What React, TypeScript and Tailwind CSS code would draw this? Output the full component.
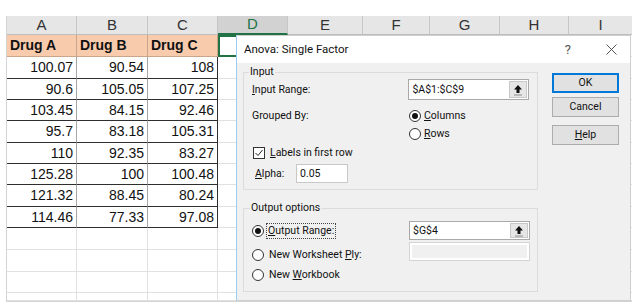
import React from "react";

const columns = [
  { label: "A", w: "w-[70px]" },
  { label: "B", w: "w-[71px]" },
  { label: "C", w: "w-[70px]" },
  { label: "D", w: "w-[70px]" },
  { label: "E", w: "w-[75px]" },
  { label: "F", w: "w-[67px]" },
  { label: "G", w: "w-[70px]" },
  { label: "H", w: "w-[69px]" },
  { label: "I", w: "w-[64px]" },
];

const data = [
  ["100.07", "90.54", "108"],
  ["90.6", "105.05", "107.25"],
  ["103.45", "84.15", "92.46"],
  ["95.7", "83.18", "105.31"],
  ["110", "92.35", "83.27"],
  ["125.28", "100", "100.48"],
  ["121.32", "88.45", "80.24"],
  ["114.46", "77.33", "97.08"],
];

const rowHeights = ["h-[22px]", "h-[21px]", "h-[21px]", "h-[22px]", "h-[21px]", "h-[21px]", "h-[22px]", "h-[21px]"];
const emptyHeights = ["h-[22px]", "h-[22px]", "h-[21px]", "h-[8px]"];

function UploadIcon() {
  return (
    <svg width="10" height="12" viewBox="0 0 10 12">
      <path d="M5 1 L9 5.5 L6.5 5.5 L6.5 9 L3.5 9 L3.5 5.5 L1 5.5 Z" fill="#111" />
      <rect x="1" y="10.5" width="8" height="1" fill="#8a8a8a" />
    </svg>
  );
}

function RangeField({ value }: { value: string }) {
  return (
    <div className="flex h-full w-[121px] border border-[#a9a9a9] bg-white">
      <div className="flex flex-1 items-center pl-[3px] text-[10.5px] text-[#111]">{value}</div>
      <div className="m-[1px] flex w-[18px] items-center justify-center border border-[#c8c8c8] bg-[#e6e6e6]">
        <UploadIcon />
      </div>
    </div>
  );
}

function Radio({ checked }: { checked?: boolean }) {
  return (
    <span className="flex h-[12px] w-[12px] shrink-0 items-center justify-center rounded-full border border-[#333] bg-white">
      {checked && <span className="h-[6px] w-[6px] rounded-full bg-[#111]" />}
    </span>
  );
}

function DlgButton({ children, primary }: { children: React.ReactNode; primary?: boolean }) {
  return (
    <div
      className={
        primary
          ? "flex h-[20px] w-[67px] items-center justify-center border-2 border-[#0078d7] bg-[#e1e1e1] text-[10.5px] text-[#111]"
          : "flex h-[20px] w-[67px] items-center justify-center border border-[#adadad] bg-[#e1e1e1] text-[10.5px] text-[#111]"
      }
    >
      {children}
    </div>
  );
}

export default function App() {
  return (
    <div
      className="relative h-[307px] w-[632px] overflow-hidden bg-white"
      style={{ fontFamily: "'Liberation Sans', Arial, sans-serif" }}
    >
      {/* Sheet */}
      <div className="ml-[6px] mt-[16px] border-b border-l border-[#d4d4d4]">
        <div className="flex h-[19px] bg-[#e6e6e6]">
          {columns.map((c) => (
            <div
              key={c.label}
              className={
                c.label === "D"
                  ? `${c.w} flex shrink-0 items-center justify-center border-b-2 border-r border-b-[#217346] border-r-[#c6c6c6] bg-[#d2d2d2] text-[15px] text-[#217346]`
                  : `${c.w} flex shrink-0 items-center justify-center border-b border-r border-b-[#bdbdbd] border-r-[#c6c6c6] text-[15px] text-[#333]`
              }
            >
              {c.label}
            </div>
          ))}
        </div>

        {/* Drug header row */}
        <div className="flex h-[22px]">
          {["Drug A", "Drug B", "Drug C"].map((t, i) => (
            <div
              key={t}
              className={`${columns[i].w} flex shrink-0 items-center border-b border-r border-[#c9a58c] bg-[#f8cbad] pl-[3px] text-[14px] font-bold text-[#111]`}
            >
              {t}
            </div>
          ))}
          <div className="w-[70px] shrink-0 border-2 border-[#217346] bg-white" />
          {columns.slice(4).map((c) => (
            <div key={c.label} className={`${c.w} shrink-0 border-b border-r border-[#e1e1e1]`} />
          ))}
        </div>

        {data.map((row, r) => (
          <div key={r} className={`flex ${rowHeights[r]}`}>
            {row.map((v, i) => (
              <div
                key={i}
                className={
                  i === 2
                    ? `${columns[i].w} flex shrink-0 items-center justify-end border-b border-r border-[#2e2e2e] pr-[3px] text-[14px] text-[#111]`
                    : `${columns[i].w} flex shrink-0 items-center justify-end border-b border-r border-b-[#2e2e2e] border-r-[#a6a6a6] pr-[3px] text-[14px] text-[#111]`
                }
              >
                {v}
              </div>
            ))}
            {columns.slice(3).map((c) => (
              <div key={c.label} className={`${c.w} shrink-0 border-b border-r border-[#e1e1e1]`} />
            ))}
          </div>
        ))}

        {emptyHeights.map((h, r) => (
          <div key={r} className={`flex ${h}`}>
            {columns.map((c) => (
              <div key={c.label} className={`${c.w} shrink-0 border-b border-r border-[#e1e1e1]`} />
            ))}
          </div>
        ))}
      </div>

      {/* Dialog */}
      <div
        className="absolute left-[236px] top-[35px] flex h-[266px] w-[395px] flex-col border border-[#cfcfcf] border-l-[#9ccbf0]"
        style={{ fontFamily: "Roboto, 'Noto Sans', sans-serif" }}
      >
        <div className="flex h-[27px] shrink-0 items-center bg-white pl-[7px] pr-[13px]">
          <span className="flex-1 text-[11.5px] text-[#111]">Anova: Single Factor</span>
          <span className="mr-[35px] text-[13px] text-[#555]">?</span>
          <svg width="11" height="11" viewBox="0 0 11 11">
            <path d="M0.5 0.5 L10.5 10.5 M10.5 0.5 L0.5 10.5" stroke="#555" strokeWidth="1" />
          </svg>
        </div>

        <div className="flex flex-1 bg-[#f0f0f0] pl-[6px] pt-[9px]">
          <div className="flex w-[295px] flex-col">
            {/* Input group */}
            <div className="relative flex h-[118px] flex-col border border-[#dcdcdc] px-[8px] pt-[6px]">
              <span className="absolute left-[5px] top-[-8px] bg-[#f0f0f0] px-[1px] text-[10.5px] leading-[14px] text-[#111]">
                Input
              </span>
              <div className="flex h-[21px] items-center">
                <span className="w-[157px] text-[10.5px] text-[#111]">
                  <u>I</u>nput Range:
                </span>
                <RangeField value="$A$1:$C$9" />
              </div>
              <div className="mt-[7px] flex">
                <span className="flex h-[18px] w-[157px] items-center text-[10.5px] text-[#111]">Grouped By:</span>
                <div className="flex flex-col">
                  <div className="flex h-[18px] items-center gap-[3px] text-[10.5px] text-[#111]">
                    <Radio checked />
                    <span>
                      <u>C</u>olumns
                    </span>
                  </div>
                  <div className="flex h-[18px] items-center gap-[3px] text-[10.5px] text-[#111]">
                    <Radio />
                    <span>
                      <u>R</u>ows
                    </span>
                  </div>
                </div>
              </div>
              <div className="mt-[1px] flex h-[18px] items-center gap-[5px] pl-[1px] text-[10.5px] text-[#111]">
                <span className="flex h-[12px] w-[12px] items-center justify-center border border-[#333] bg-white">
                  <svg width="10" height="10" viewBox="0 0 10 10">
                    <path d="M1.5 5 L4 7.5 L8.5 2" stroke="#222" strokeWidth="1" fill="none" />
                  </svg>
                </span>
                <span>
                  <u>L</u>abels in first row
                </span>
              </div>
              <div className="mt-[2px] flex h-[19px] items-center pl-[3px] text-[10.5px] text-[#111]">
                <span className="w-[41px]">
                  <u>A</u>lpha:
                </span>
                <div className="flex h-full w-[52px] items-center border border-[#c8c8c8] bg-white pl-[3px]">0.05</div>
              </div>
            </div>

            {/* Output group */}
            <div className="relative mt-[18px] flex h-[84px] border border-[#dcdcdc] pl-[8px] pt-[12px]">
              <span className="absolute left-[6px] top-[-8px] bg-[#f0f0f0] px-[1px] text-[10.5px] leading-[14px] text-[#111]">
                Output options
              </span>
              <div className="flex w-[157px] flex-col text-[10.5px] text-[#111]">
                <div className="flex h-[20px] items-center gap-[2px]">
                  <Radio checked />
                  <span className="border border-dotted border-[#444] px-[1px] leading-[14px]">
                    <u>O</u>utput Range:
                  </span>
                </div>
                <div className="mt-[4px] flex h-[20px] items-center gap-[5px]">
                  <Radio />
                  <span>
                    New Worksheet <u>P</u>ly:
                  </span>
                </div>
                <div className="flex h-[20px] items-center gap-[5px]">
                  <Radio />
                  <span>
                    New <u>W</u>orkbook
                  </span>
                </div>
              </div>
              <div className="flex flex-col">
                <div className="h-[19px]">
                  <RangeField value="$G$4" />
                </div>
                <div className="mt-[2px] h-[19px] w-[121px] border border-[#d4d4d4] bg-white p-[2px]">
                  <div className="h-full w-full bg-[#f0f0f0]" />
                </div>
              </div>
            </div>
          </div>

          {/* Buttons */}
          <div className="ml-[14px] flex flex-col pt-[1px]">
            <DlgButton primary>OK</DlgButton>
            <div className="mt-[4px]">
              <DlgButton>Cancel</DlgButton>
            </div>
            <div className="mt-[8px]">
              <DlgButton>
                <u>H</u>elp
              </DlgButton>
            </div>
          </div>
        </div>
      </div>
    </div>
  );
}
